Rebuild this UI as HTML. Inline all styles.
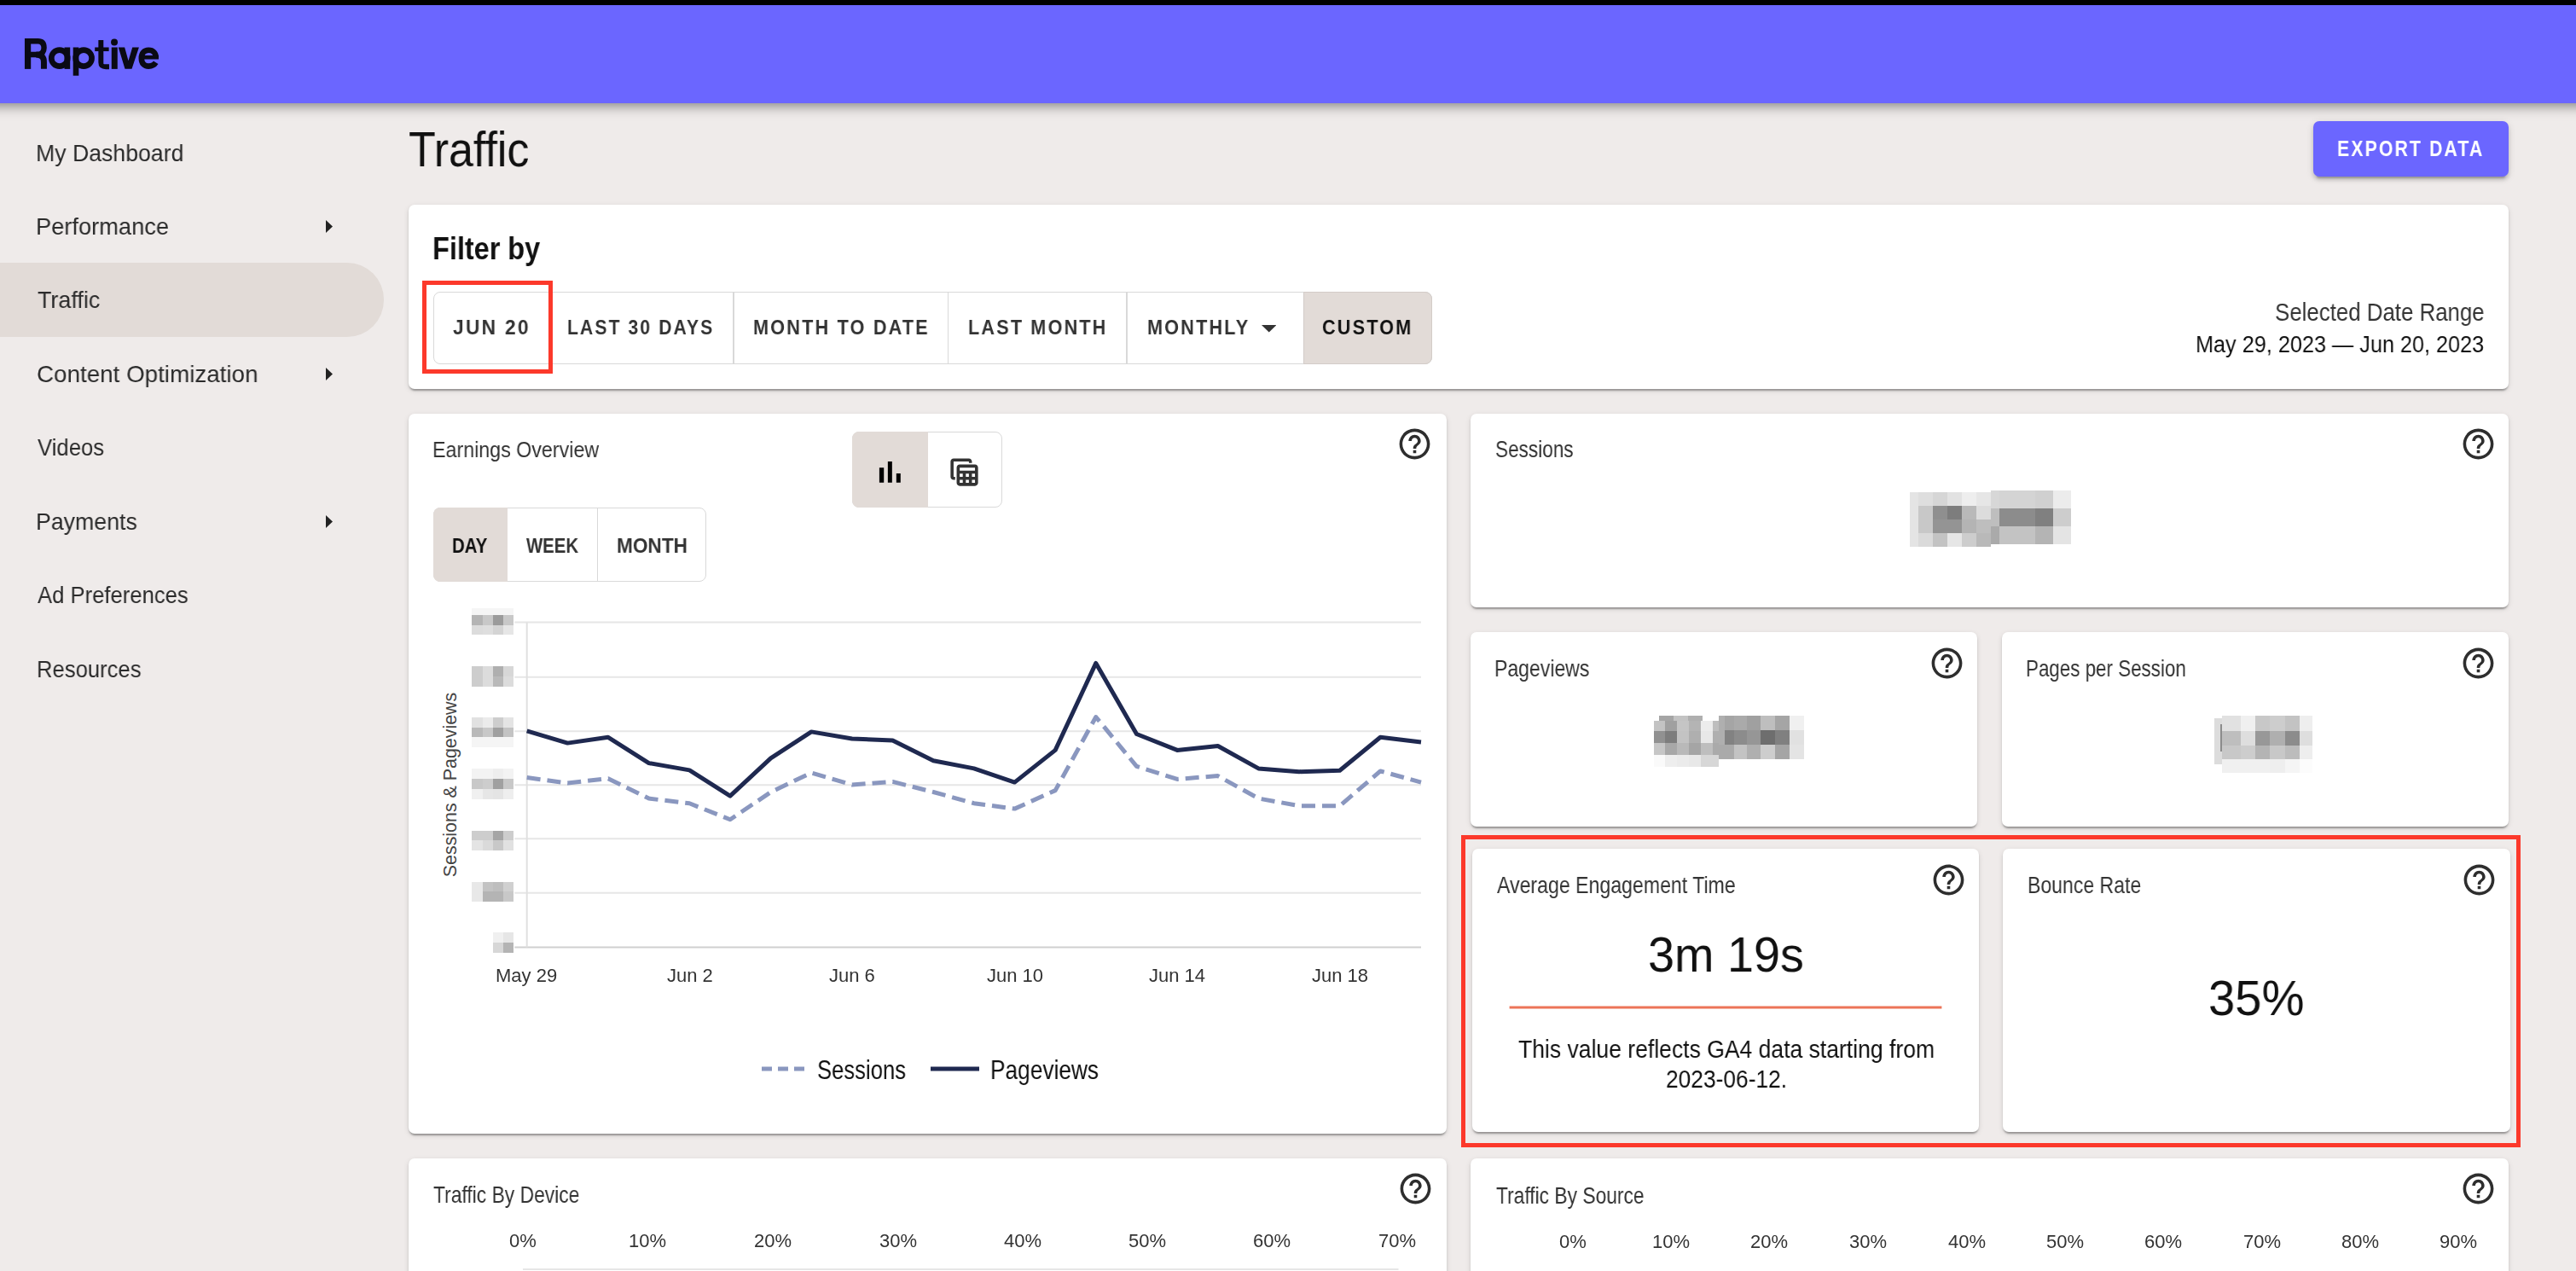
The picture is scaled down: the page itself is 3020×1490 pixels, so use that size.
<!DOCTYPE html>
<html><head><meta charset="utf-8"><style>
html,body{margin:0;padding:0;}
body{width:3020px;height:1490px;overflow:hidden;position:relative;background:#efebea;font-family:"Liberation Sans",sans-serif;}
.a{position:absolute;}
.t{position:absolute;white-space:nowrap;transform-origin:0 0;z-index:3;will-change:transform;}
</style></head><body>
<div class="a" style="left:0.0px;top:0.0px;width:3020.0px;height:6.0px;background:#000;"></div>
<div class="a" style="left:-60.0px;top:6.0px;width:3140.0px;height:115.0px;background:#6b66ff;box-shadow:0 4px 8px -2px rgba(0,0,0,.2),0 8px 10px 0 rgba(0,0,0,.14),0 2px 20px 0 rgba(0,0,0,.12);z-index:2;"></div>
<svg class="a" style="left:0;top:0;z-index:3" width="220" height="110" viewBox="0 0 220 110"><g transform="translate(20,30) scale(0.069881)" fill="#0a0a14" stroke="#0a0a14">
<rect x="128" y="215" width="104" height="513" stroke="none"/>
<path d="M180,260 H350 C430,260 452,310 452,372 C452,440 420,487 340,487 H180" fill="none" stroke-width="92"/>
<path d="M320,487 C420,492 450,540 450,610 V728" fill="none" stroke-width="100"/>
<ellipse cx="712" cy="546" rx="135" ry="136" fill="none" stroke-width="95"/>
<rect x="795" y="365" width="95" height="363" stroke="none"/>
<rect x="940" y="365" width="95" height="475" stroke="none"/>
<ellipse cx="1118" cy="546" rx="135" ry="136" fill="none" stroke-width="95"/>
<path d="M1407,245 V620 C1407,680 1430,690 1490,690 H1545" fill="none" stroke-width="85"/>
<rect x="1305" y="365" width="235" height="65" stroke="none"/>
<circle cx="1632" cy="280" r="57" stroke="none"/>
<rect x="1585" y="365" width="100" height="363" stroke="none"/>
<polygon points="1700,365 1805,365 1868,590 1935,365 2045,365 1925,728 1810,728" stroke="none"/>
<path d="M2328,620 C2300,665 2260,681 2207,681 C2130,681 2087,630 2087,546 C2087,465 2130,412 2207,412 C2285,412 2328,465 2328,532" fill="none" stroke-width="95"/>
<rect x="2087" y="500" width="288" height="65" stroke="none"/>
</g></svg>
<div class="a" style="left:0.0px;top:308.0px;width:450.0px;height:86.6px;background:#e2dbd7;border-radius:0 43px 43px 0;"></div>
<svg class="a" style="left:382px;top:257.5px" width="8" height="15" viewBox="0 0 8 15"><path d="M0 0L8 7.5L0 15Z" fill="#222"/></svg>
<svg class="a" style="left:382px;top:430.9px" width="8" height="15" viewBox="0 0 8 15"><path d="M0 0L8 7.5L0 15Z" fill="#222"/></svg>
<svg class="a" style="left:382px;top:604.0px" width="8" height="15" viewBox="0 0 8 15"><path d="M0 0L8 7.5L0 15Z" fill="#222"/></svg>
<div class="a" style="left:2712.0px;top:142.0px;width:229.0px;height:65.0px;background:#6b66ff;border-radius:7px;box-shadow:0 6px 2px -4px rgba(0,0,0,.2),0 4px 4px 0 rgba(0,0,0,.14),0 2px 10px 0 rgba(0,0,0,.12);"></div>
<div class="a" style="left:479.0px;top:240.0px;width:2462.0px;height:215.8px;background:#fff;border-radius:7px;box-shadow:0 4px 2px -2px rgba(0,0,0,0.2),0 2px 2px 0 rgba(0,0,0,0.14),0 2px 6px 0 rgba(0,0,0,0.12);"></div>
<div class="a" style="left:479.0px;top:484.8px;width:1217.0px;height:844.0px;background:#fff;border-radius:7px;box-shadow:0 4px 2px -2px rgba(0,0,0,0.2),0 2px 2px 0 rgba(0,0,0,0.14),0 2px 6px 0 rgba(0,0,0,0.12);"></div>
<div class="a" style="left:1724.0px;top:484.9px;width:1217.0px;height:227.1px;background:#fff;border-radius:7px;box-shadow:0 4px 2px -2px rgba(0,0,0,0.2),0 2px 2px 0 rgba(0,0,0,0.14),0 2px 6px 0 rgba(0,0,0,0.12);"></div>
<div class="a" style="left:1724.0px;top:740.8px;width:593.6px;height:228.5px;background:#fff;border-radius:7px;box-shadow:0 4px 2px -2px rgba(0,0,0,0.2),0 2px 2px 0 rgba(0,0,0,0.14),0 2px 6px 0 rgba(0,0,0,0.12);"></div>
<div class="a" style="left:2347.0px;top:740.8px;width:594.0px;height:228.5px;background:#fff;border-radius:7px;box-shadow:0 4px 2px -2px rgba(0,0,0,0.2),0 2px 2px 0 rgba(0,0,0,0.14),0 2px 6px 0 rgba(0,0,0,0.12);"></div>
<div class="a" style="left:1725.8px;top:994.8px;width:593.8px;height:331.9px;background:#fff;border-radius:7px;box-shadow:0 4px 2px -2px rgba(0,0,0,0.2),0 2px 2px 0 rgba(0,0,0,0.14),0 2px 6px 0 rgba(0,0,0,0.12);"></div>
<div class="a" style="left:2348.4px;top:994.8px;width:594.8px;height:331.9px;background:#fff;border-radius:7px;box-shadow:0 4px 2px -2px rgba(0,0,0,0.2),0 2px 2px 0 rgba(0,0,0,0.14),0 2px 6px 0 rgba(0,0,0,0.12);"></div>
<div class="a" style="left:479.0px;top:1357.8px;width:1217.0px;height:172.2px;background:#fff;border-radius:7px;box-shadow:0 4px 2px -2px rgba(0,0,0,0.2),0 2px 2px 0 rgba(0,0,0,0.14),0 2px 6px 0 rgba(0,0,0,0.12);"></div>
<div class="a" style="left:1724.0px;top:1357.6px;width:1217.0px;height:172.4px;background:#fff;border-radius:7px;box-shadow:0 4px 2px -2px rgba(0,0,0,0.2),0 2px 2px 0 rgba(0,0,0,0.14),0 2px 6px 0 rgba(0,0,0,0.12);"></div>
<div class="a" style="left:508.3px;top:342.3px;width:1170.7px;height:84.9px;border:1.5px solid #d9d9d9;border-radius:8px;box-sizing:border-box;overflow:hidden;"></div>
<div class="a" style="left:1528.0px;top:342.3px;width:151.0px;height:84.9px;background:#e2dbd7;border-radius:0 8px 8px 0;border:1.5px solid #d3ccc8;box-sizing:border-box;"></div>
<div class="a" style="left:643.2px;top:342.3px;width:1.5px;height:84.9px;background:#d9d9d9;"></div>
<div class="a" style="left:859.2px;top:342.3px;width:1.5px;height:84.9px;background:#d9d9d9;"></div>
<div class="a" style="left:1110.8px;top:342.3px;width:1.5px;height:84.9px;background:#d9d9d9;"></div>
<div class="a" style="left:1320.0px;top:342.3px;width:1.5px;height:84.9px;background:#d9d9d9;"></div>
<svg class="a" style="left:1478.5px;top:381px" width="17.5" height="8.5" viewBox="0 0 17.5 8.5"><path d="M0 0H17.5L8.75 8.5Z" fill="#333"/></svg>
<div class="a" style="left:999.0px;top:506.1px;width:175.5px;height:88.9px;border:1.5px solid #d9d9d9;border-radius:8px;box-sizing:border-box;"></div>
<div class="a" style="left:999.0px;top:506.1px;width:88.8px;height:88.9px;background:#e2dbd7;border-radius:8px 0 0 8px;"></div>
<svg class="a" style="left:1022.1px;top:532.1px" width="42.7" height="42.7" viewBox="0 0 24 24"><path d="M5 9.2h3V19H5zM10.6 5h2.8v14h-2.8zm5.6 8H19v6h-2.8z" fill="#000"/></svg>
<svg class="a" style="left:1109.3px;top:531.5px" width="43" height="43" viewBox="0 0 24 24"><path d="M19 7H9c-1.1 0-2 .9-2 2v10c0 1.1.9 2 2 2h10c1.1 0 2-.9 2-2V9c0-1.1-.9-2-2-2zm0 2v2H9V9h10zm-6 6v-2h2v2h-2zm2 2v2h-2v-2h2zm-4-2H9v-2h2v2zm6-2h2v2h-2v-2zm-8 4h2v2H9v-2zm8 2v-2h2v2h-2zM6 17H5c-1.1 0-2-.9-2-2V5c0-1.1.9-2 2-2h10c1.1 0 2 .9 2 2v1h-2V5H5v10h1v2z" fill="#333"/></svg>
<div class="a" style="left:508.3px;top:595.2px;width:319.3px;height:86.8px;border:1.5px solid #d9d9d9;border-radius:8px;box-sizing:border-box;"></div>
<div class="a" style="left:508.3px;top:595.2px;width:86.4px;height:86.8px;background:#e2dbd7;border-radius:8px 0 0 8px;"></div>
<div class="a" style="left:699.7px;top:595.2px;width:1.4px;height:86.8px;background:#d9d9d9;"></div>
<svg class="a" style="left:1637.0px;top:498.9px" width="43.0" height="43.0" viewBox="0 0 24 24"><path d="M11 18h2v-2h-2v2zm1-16C6.48 2 2 6.48 2 12s4.48 10 10 10 10-4.48 10-10S17.52 2 12 2zm0 18c-4.41 0-8-3.59-8-8s3.59-8 8-8 8 3.59 8 8-3.59 8-8 8zm0-14c-2.21 0-4 1.79-4 4h2c0-1.1.9-2 2-2s2 .9 2 2c0 2-3 1.75-3 5h2c0-2.25 3-2.5 3-5 0-2.21-1.79-4-4-4z" fill="#2e2e2e"/></svg>
<svg class="a" style="left:2884.0px;top:498.7px" width="43.0" height="43.0" viewBox="0 0 24 24"><path d="M11 18h2v-2h-2v2zm1-16C6.48 2 2 6.48 2 12s4.48 10 10 10 10-4.48 10-10S17.52 2 12 2zm0 18c-4.41 0-8-3.59-8-8s3.59-8 8-8 8 3.59 8 8-3.59 8-8 8zm0-14c-2.21 0-4 1.79-4 4h2c0-1.1.9-2 2-2s2 .9 2 2c0 2-3 1.75-3 5h2c0-2.25 3-2.5 3-5 0-2.21-1.79-4-4-4z" fill="#2e2e2e"/></svg>
<svg class="a" style="left:2260.6px;top:756.1px" width="43.0" height="43.0" viewBox="0 0 24 24"><path d="M11 18h2v-2h-2v2zm1-16C6.48 2 2 6.48 2 12s4.48 10 10 10 10-4.48 10-10S17.52 2 12 2zm0 18c-4.41 0-8-3.59-8-8s3.59-8 8-8 8 3.59 8 8-3.59 8-8 8zm0-14c-2.21 0-4 1.79-4 4h2c0-1.1.9-2 2-2s2 .9 2 2c0 2-3 1.75-3 5h2c0-2.25 3-2.5 3-5 0-2.21-1.79-4-4-4z" fill="#2e2e2e"/></svg>
<svg class="a" style="left:2884.0px;top:756.1px" width="43.0" height="43.0" viewBox="0 0 24 24"><path d="M11 18h2v-2h-2v2zm1-16C6.48 2 2 6.48 2 12s4.48 10 10 10 10-4.48 10-10S17.52 2 12 2zm0 18c-4.41 0-8-3.59-8-8s3.59-8 8-8 8 3.59 8 8-3.59 8-8 8zm0-14c-2.21 0-4 1.79-4 4h2c0-1.1.9-2 2-2s2 .9 2 2c0 2-3 1.75-3 5h2c0-2.25 3-2.5 3-5 0-2.21-1.79-4-4-4z" fill="#2e2e2e"/></svg>
<svg class="a" style="left:2262.7px;top:1010.0px" width="43.0" height="43.0" viewBox="0 0 24 24"><path d="M11 18h2v-2h-2v2zm1-16C6.48 2 2 6.48 2 12s4.48 10 10 10 10-4.48 10-10S17.52 2 12 2zm0 18c-4.41 0-8-3.59-8-8s3.59-8 8-8 8 3.59 8 8-3.59 8-8 8zm0-14c-2.21 0-4 1.79-4 4h2c0-1.1.9-2 2-2s2 .9 2 2c0 2-3 1.75-3 5h2c0-2.25 3-2.5 3-5 0-2.21-1.79-4-4-4z" fill="#2e2e2e"/></svg>
<svg class="a" style="left:2885.4px;top:1010.0px" width="43.0" height="43.0" viewBox="0 0 24 24"><path d="M11 18h2v-2h-2v2zm1-16C6.48 2 2 6.48 2 12s4.48 10 10 10 10-4.48 10-10S17.52 2 12 2zm0 18c-4.41 0-8-3.59-8-8s3.59-8 8-8 8 3.59 8 8-3.59 8-8 8zm0-14c-2.21 0-4 1.79-4 4h2c0-1.1.9-2 2-2s2 .9 2 2c0 2-3 1.75-3 5h2c0-2.25 3-2.5 3-5 0-2.21-1.79-4-4-4z" fill="#2e2e2e"/></svg>
<svg class="a" style="left:1638.1px;top:1372.1px" width="43.0" height="43.0" viewBox="0 0 24 24"><path d="M11 18h2v-2h-2v2zm1-16C6.48 2 2 6.48 2 12s4.48 10 10 10 10-4.48 10-10S17.52 2 12 2zm0 18c-4.41 0-8-3.59-8-8s3.59-8 8-8 8 3.59 8 8-3.59 8-8 8zm0-14c-2.21 0-4 1.79-4 4h2c0-1.1.9-2 2-2s2 .9 2 2c0 2-3 1.75-3 5h2c0-2.25 3-2.5 3-5 0-2.21-1.79-4-4-4z" fill="#2e2e2e"/></svg>
<svg class="a" style="left:2884.0px;top:1372.2px" width="43.0" height="43.0" viewBox="0 0 24 24"><path d="M11 18h2v-2h-2v2zm1-16C6.48 2 2 6.48 2 12s4.48 10 10 10 10-4.48 10-10S17.52 2 12 2zm0 18c-4.41 0-8-3.59-8-8s3.59-8 8-8 8 3.59 8 8-3.59 8-8 8zm0-14c-2.21 0-4 1.79-4 4h2c0-1.1.9-2 2-2s2 .9 2 2c0 2-3 1.75-3 5h2c0-2.25 3-2.5 3-5 0-2.21-1.79-4-4-4z" fill="#2e2e2e"/></svg>
<svg class="a" style="left:0;top:0" width="3020" height="1490"><line x1="603.3" y1="729.5" x2="1666" y2="729.5" stroke="#e6e6e6" stroke-width="2"/><line x1="603.3" y1="793.7" x2="1666" y2="793.7" stroke="#e6e6e6" stroke-width="2"/><line x1="603.3" y1="857.2" x2="1666" y2="857.2" stroke="#e6e6e6" stroke-width="2"/><line x1="603.3" y1="920.3" x2="1666" y2="920.3" stroke="#e6e6e6" stroke-width="2"/><line x1="603.3" y1="983.3" x2="1666" y2="983.3" stroke="#e6e6e6" stroke-width="2"/><line x1="603.3" y1="1046.8" x2="1666" y2="1046.8" stroke="#e6e6e6" stroke-width="2"/><line x1="603.3" y1="1110.6" x2="1666" y2="1110.6" stroke="#d0d0d0" stroke-width="2"/><line x1="617.7" y1="729.5" x2="617.7" y2="1110.6" stroke="#e0e0e0" stroke-width="2"/><polyline points="617.7,911.6 665.4,918.0 713.0,912.7 760.7,936.1 808.3,941.8 856.0,960.7 903.6,928.6 951.2,905.9 998.9,920.0 1046.5,916.4 1094.2,928.5 1141.8,941.7 1189.5,948.1 1237.2,926.6 1284.8,840.5 1332.5,898.3 1380.1,913.4 1427.8,909.6 1475.4,936.0 1523.1,944.7 1570.7,944.7 1618.3,903.9 1666.0,917.1" fill="none" stroke="#8a97bf" stroke-width="5" stroke-dasharray="16,8" stroke-linejoin="round"/><polyline points="617.7,856.8 665.4,871.1 713.0,864.3 760.7,894.6 808.3,902.9 856.0,933.1 903.6,888.9 951.2,857.9 998.9,866.0 1046.5,868.0 1094.2,891.8 1141.8,900.9 1189.5,917.1 1237.2,879.4 1284.8,777.4 1332.5,860.5 1380.1,879.4 1427.8,874.5 1475.4,900.9 1523.1,904.7 1570.7,903.2 1618.3,864.3 1666.0,869.9" fill="none" stroke="#1f2950" stroke-width="5" stroke-linejoin="round"/><line x1="893" y1="1253" x2="943" y2="1253" stroke="#8a97bf" stroke-width="5" stroke-dasharray="12,7"/><line x1="1091" y1="1253" x2="1148" y2="1253" stroke="#1f2950" stroke-width="5"/><line x1="613" y1="1488" x2="1639.5" y2="1488" stroke="#e6e6e6" stroke-width="2"/><line x1="1769.6" y1="1181" x2="2276.4" y2="1181" stroke="#ec7459" stroke-width="3"/></svg>
<div style="position:absolute;left:528.8px;top:919.9px;width:0;height:0;z-index:3"><div style="position:absolute;left:0;top:0;font-size:21.4px;line-height:21.4px;color:#444;transform:translate(-50%,-50%) rotate(-90deg);white-space:nowrap;">Sessions &amp; Pageviews</div></div>
<div class="a" style="left:553.0px;top:713.0px;width:13.0px;height:8.0px;background:rgb(245,245,245);"></div>
<div class="a" style="left:566.0px;top:713.0px;width:12.0px;height:8.0px;background:rgb(245,245,245);"></div>
<div class="a" style="left:578.0px;top:713.0px;width:12.0px;height:8.0px;background:rgb(245,245,245);"></div>
<div class="a" style="left:590.0px;top:713.0px;width:12.0px;height:8.0px;background:rgb(245,245,245);"></div>
<div class="a" style="left:553.0px;top:721.0px;width:13.0px;height:12.0px;background:rgb(180,180,180);"></div>
<div class="a" style="left:566.0px;top:721.0px;width:12.0px;height:12.0px;background:rgb(200,200,200);"></div>
<div class="a" style="left:578.0px;top:721.0px;width:12.0px;height:12.0px;background:rgb(155,155,155);"></div>
<div class="a" style="left:590.0px;top:721.0px;width:12.0px;height:12.0px;background:rgb(200,200,200);"></div>
<div class="a" style="left:553.0px;top:733.0px;width:13.0px;height:11.0px;background:rgb(220,220,220);"></div>
<div class="a" style="left:566.0px;top:733.0px;width:12.0px;height:11.0px;background:rgb(222,222,222);"></div>
<div class="a" style="left:578.0px;top:733.0px;width:12.0px;height:11.0px;background:rgb(212,212,212);"></div>
<div class="a" style="left:590.0px;top:733.0px;width:12.0px;height:11.0px;background:rgb(230,230,230);"></div>
<div class="a" style="left:553.0px;top:781.0px;width:13.0px;height:12.0px;background:rgb(205,205,205);"></div>
<div class="a" style="left:566.0px;top:781.0px;width:12.0px;height:12.0px;background:rgb(220,220,220);"></div>
<div class="a" style="left:578.0px;top:781.0px;width:12.0px;height:12.0px;background:rgb(175,175,175);"></div>
<div class="a" style="left:590.0px;top:781.0px;width:12.0px;height:12.0px;background:rgb(215,215,215);"></div>
<div class="a" style="left:553.0px;top:793.0px;width:13.0px;height:12.0px;background:rgb(205,205,205);"></div>
<div class="a" style="left:566.0px;top:793.0px;width:12.0px;height:12.0px;background:rgb(220,220,220);"></div>
<div class="a" style="left:578.0px;top:793.0px;width:12.0px;height:12.0px;background:rgb(185,185,185);"></div>
<div class="a" style="left:590.0px;top:793.0px;width:12.0px;height:12.0px;background:rgb(220,220,220);"></div>
<div class="a" style="left:553.0px;top:841.0px;width:13.0px;height:12.0px;background:rgb(225,225,225);"></div>
<div class="a" style="left:566.0px;top:841.0px;width:12.0px;height:12.0px;background:rgb(235,235,235);"></div>
<div class="a" style="left:578.0px;top:841.0px;width:12.0px;height:12.0px;background:rgb(205,205,205);"></div>
<div class="a" style="left:590.0px;top:841.0px;width:12.0px;height:12.0px;background:rgb(228,228,228);"></div>
<div class="a" style="left:553.0px;top:853.0px;width:13.0px;height:11.0px;background:rgb(185,185,185);"></div>
<div class="a" style="left:566.0px;top:853.0px;width:12.0px;height:11.0px;background:rgb(200,200,200);"></div>
<div class="a" style="left:578.0px;top:853.0px;width:12.0px;height:11.0px;background:rgb(160,160,160);"></div>
<div class="a" style="left:590.0px;top:853.0px;width:12.0px;height:11.0px;background:rgb(195,195,195);"></div>
<div class="a" style="left:553.0px;top:864.0px;width:13.0px;height:12.0px;background:rgb(245,245,245);"></div>
<div class="a" style="left:566.0px;top:864.0px;width:12.0px;height:12.0px;background:rgb(245,245,245);"></div>
<div class="a" style="left:578.0px;top:864.0px;width:12.0px;height:12.0px;background:rgb(245,245,245);"></div>
<div class="a" style="left:590.0px;top:864.0px;width:12.0px;height:12.0px;background:rgb(245,245,245);"></div>
<div class="a" style="left:553.0px;top:901.0px;width:13.0px;height:12.0px;background:rgb(243,243,243);"></div>
<div class="a" style="left:566.0px;top:901.0px;width:12.0px;height:12.0px;background:rgb(243,243,243);"></div>
<div class="a" style="left:578.0px;top:901.0px;width:12.0px;height:12.0px;background:rgb(238,238,238);"></div>
<div class="a" style="left:590.0px;top:901.0px;width:12.0px;height:12.0px;background:rgb(243,243,243);"></div>
<div class="a" style="left:553.0px;top:913.0px;width:13.0px;height:12.0px;background:rgb(200,200,200);"></div>
<div class="a" style="left:566.0px;top:913.0px;width:12.0px;height:12.0px;background:rgb(205,205,205);"></div>
<div class="a" style="left:578.0px;top:913.0px;width:12.0px;height:12.0px;background:rgb(160,160,160);"></div>
<div class="a" style="left:590.0px;top:913.0px;width:12.0px;height:12.0px;background:rgb(200,200,200);"></div>
<div class="a" style="left:553.0px;top:925.0px;width:13.0px;height:12.0px;background:rgb(240,240,240);"></div>
<div class="a" style="left:566.0px;top:925.0px;width:12.0px;height:12.0px;background:rgb(230,230,230);"></div>
<div class="a" style="left:578.0px;top:925.0px;width:12.0px;height:12.0px;background:rgb(228,228,228);"></div>
<div class="a" style="left:590.0px;top:925.0px;width:12.0px;height:12.0px;background:rgb(238,238,238);"></div>
<div class="a" style="left:553.0px;top:974.0px;width:13.0px;height:11.0px;background:rgb(205,205,205);"></div>
<div class="a" style="left:566.0px;top:974.0px;width:12.0px;height:11.0px;background:rgb(205,205,205);"></div>
<div class="a" style="left:578.0px;top:974.0px;width:12.0px;height:11.0px;background:rgb(165,165,165);"></div>
<div class="a" style="left:590.0px;top:974.0px;width:12.0px;height:11.0px;background:rgb(205,205,205);"></div>
<div class="a" style="left:553.0px;top:985.0px;width:13.0px;height:12.0px;background:rgb(228,228,228);"></div>
<div class="a" style="left:566.0px;top:985.0px;width:12.0px;height:12.0px;background:rgb(218,218,218);"></div>
<div class="a" style="left:578.0px;top:985.0px;width:12.0px;height:12.0px;background:rgb(200,200,200);"></div>
<div class="a" style="left:590.0px;top:985.0px;width:12.0px;height:12.0px;background:rgb(225,225,225);"></div>
<div class="a" style="left:553.0px;top:1034.0px;width:13.0px;height:11.0px;background:rgb(232,232,232);"></div>
<div class="a" style="left:566.0px;top:1034.0px;width:12.0px;height:11.0px;background:rgb(195,195,195);"></div>
<div class="a" style="left:578.0px;top:1034.0px;width:12.0px;height:11.0px;background:rgb(190,190,190);"></div>
<div class="a" style="left:590.0px;top:1034.0px;width:12.0px;height:11.0px;background:rgb(208,208,208);"></div>
<div class="a" style="left:553.0px;top:1045.0px;width:13.0px;height:12.0px;background:rgb(232,232,232);"></div>
<div class="a" style="left:566.0px;top:1045.0px;width:12.0px;height:12.0px;background:rgb(180,180,180);"></div>
<div class="a" style="left:578.0px;top:1045.0px;width:12.0px;height:12.0px;background:rgb(180,180,180);"></div>
<div class="a" style="left:590.0px;top:1045.0px;width:12.0px;height:12.0px;background:rgb(200,200,200);"></div>
<div class="a" style="left:578.0px;top:1093.0px;width:12.0px;height:12.0px;background:rgb(240,240,240);"></div>
<div class="a" style="left:590.0px;top:1093.0px;width:12.0px;height:12.0px;background:rgb(230,230,230);"></div>
<div class="a" style="left:578.0px;top:1105.0px;width:12.0px;height:12.0px;background:rgb(215,215,215);"></div>
<div class="a" style="left:590.0px;top:1105.0px;width:12.0px;height:12.0px;background:rgb(180,180,180);"></div>
<div class="a" style="left:2239.0px;top:577.0px;width:10.0px;height:64.0px;background:rgb(228,228,228);"></div>
<div class="a" style="left:2249.0px;top:577.0px;width:17.0px;height:16.0px;background:rgb(222,222,222);"></div>
<div class="a" style="left:2266.0px;top:577.0px;width:17.0px;height:16.0px;background:rgb(214,214,214);"></div>
<div class="a" style="left:2283.0px;top:577.0px;width:17.0px;height:16.0px;background:rgb(226,226,226);"></div>
<div class="a" style="left:2300.0px;top:577.0px;width:17.0px;height:16.0px;background:rgb(238,238,238);"></div>
<div class="a" style="left:2317.0px;top:577.0px;width:17.0px;height:16.0px;background:rgb(230,230,230);"></div>
<div class="a" style="left:2249.0px;top:593.0px;width:17.0px;height:16.0px;background:rgb(200,200,200);"></div>
<div class="a" style="left:2266.0px;top:593.0px;width:17.0px;height:16.0px;background:rgb(143,143,143);"></div>
<div class="a" style="left:2283.0px;top:593.0px;width:17.0px;height:16.0px;background:rgb(125,125,125);"></div>
<div class="a" style="left:2300.0px;top:593.0px;width:17.0px;height:16.0px;background:rgb(185,185,185);"></div>
<div class="a" style="left:2317.0px;top:593.0px;width:17.0px;height:16.0px;background:rgb(220,220,220);"></div>
<div class="a" style="left:2249.0px;top:609.0px;width:17.0px;height:16.0px;background:rgb(200,200,200);"></div>
<div class="a" style="left:2266.0px;top:609.0px;width:17.0px;height:16.0px;background:rgb(148,148,148);"></div>
<div class="a" style="left:2283.0px;top:609.0px;width:17.0px;height:16.0px;background:rgb(148,148,148);"></div>
<div class="a" style="left:2300.0px;top:609.0px;width:17.0px;height:16.0px;background:rgb(180,180,180);"></div>
<div class="a" style="left:2317.0px;top:609.0px;width:17.0px;height:16.0px;background:rgb(190,190,190);"></div>
<div class="a" style="left:2249.0px;top:625.0px;width:17.0px;height:16.0px;background:rgb(218,218,218);"></div>
<div class="a" style="left:2266.0px;top:625.0px;width:17.0px;height:16.0px;background:rgb(195,195,195);"></div>
<div class="a" style="left:2283.0px;top:625.0px;width:17.0px;height:16.0px;background:rgb(230,230,230);"></div>
<div class="a" style="left:2300.0px;top:625.0px;width:17.0px;height:16.0px;background:rgb(205,205,205);"></div>
<div class="a" style="left:2317.0px;top:625.0px;width:17.0px;height:16.0px;background:rgb(185,185,185);"></div>
<div class="a" style="left:2334.0px;top:575.0px;width:10.0px;height:21.0px;background:rgb(215,215,215);"></div>
<div class="a" style="left:2344.0px;top:575.0px;width:21.0px;height:21.0px;background:rgb(212,212,212);"></div>
<div class="a" style="left:2365.0px;top:575.0px;width:21.0px;height:21.0px;background:rgb(212,212,212);"></div>
<div class="a" style="left:2386.0px;top:575.0px;width:21.0px;height:21.0px;background:rgb(208,208,208);"></div>
<div class="a" style="left:2407.0px;top:575.0px;width:21.0px;height:21.0px;background:rgb(236,236,236);"></div>
<div class="a" style="left:2334.0px;top:596.0px;width:10.0px;height:21.0px;background:rgb(190,190,190);"></div>
<div class="a" style="left:2344.0px;top:596.0px;width:21.0px;height:21.0px;background:rgb(140,140,140);"></div>
<div class="a" style="left:2365.0px;top:596.0px;width:21.0px;height:21.0px;background:rgb(140,140,140);"></div>
<div class="a" style="left:2386.0px;top:596.0px;width:21.0px;height:21.0px;background:rgb(128,128,128);"></div>
<div class="a" style="left:2407.0px;top:596.0px;width:21.0px;height:21.0px;background:rgb(205,205,205);"></div>
<div class="a" style="left:2334.0px;top:617.0px;width:10.0px;height:21.0px;background:rgb(170,170,170);"></div>
<div class="a" style="left:2344.0px;top:617.0px;width:21.0px;height:21.0px;background:rgb(195,195,195);"></div>
<div class="a" style="left:2365.0px;top:617.0px;width:21.0px;height:21.0px;background:rgb(195,195,195);"></div>
<div class="a" style="left:2386.0px;top:617.0px;width:21.0px;height:21.0px;background:rgb(180,180,180);"></div>
<div class="a" style="left:2407.0px;top:617.0px;width:21.0px;height:21.0px;background:rgb(228,228,228);"></div>
<div class="a" style="left:1945.0px;top:839.0px;width:17.0px;height:6.0px;background:rgb(165,165,165);"></div>
<div class="a" style="left:1962.0px;top:839.0px;width:17.0px;height:6.0px;background:rgb(195,195,195);"></div>
<div class="a" style="left:1979.0px;top:839.0px;width:17.0px;height:6.0px;background:rgb(175,175,175);"></div>
<div class="a" style="left:1939.0px;top:845.0px;width:13.0px;height:12.0px;background:rgb(195,195,195);"></div>
<div class="a" style="left:1952.0px;top:845.0px;width:14.0px;height:12.0px;background:rgb(160,160,160);"></div>
<div class="a" style="left:1966.0px;top:845.0px;width:14.0px;height:12.0px;background:rgb(197,197,197);"></div>
<div class="a" style="left:1980.0px;top:845.0px;width:14.0px;height:12.0px;background:rgb(180,180,180);"></div>
<div class="a" style="left:1994.0px;top:845.0px;width:14.0px;height:12.0px;background:rgb(236,236,236);"></div>
<div class="a" style="left:2008.0px;top:845.0px;width:7.0px;height:12.0px;background:rgb(190,190,190);"></div>
<div class="a" style="left:1939.0px;top:857.0px;width:13.0px;height:14.0px;background:rgb(145,145,145);"></div>
<div class="a" style="left:1952.0px;top:857.0px;width:14.0px;height:14.0px;background:rgb(125,125,125);"></div>
<div class="a" style="left:1966.0px;top:857.0px;width:14.0px;height:14.0px;background:rgb(195,195,195);"></div>
<div class="a" style="left:1980.0px;top:857.0px;width:14.0px;height:14.0px;background:rgb(175,175,175);"></div>
<div class="a" style="left:1994.0px;top:857.0px;width:14.0px;height:14.0px;background:rgb(232,232,232);"></div>
<div class="a" style="left:2008.0px;top:857.0px;width:7.0px;height:14.0px;background:rgb(175,175,175);"></div>
<div class="a" style="left:1939.0px;top:871.0px;width:13.0px;height:14.0px;background:rgb(198,198,198);"></div>
<div class="a" style="left:1952.0px;top:871.0px;width:14.0px;height:14.0px;background:rgb(168,168,168);"></div>
<div class="a" style="left:1966.0px;top:871.0px;width:14.0px;height:14.0px;background:rgb(185,185,185);"></div>
<div class="a" style="left:1980.0px;top:871.0px;width:14.0px;height:14.0px;background:rgb(165,165,165);"></div>
<div class="a" style="left:1994.0px;top:871.0px;width:14.0px;height:14.0px;background:rgb(190,190,190);"></div>
<div class="a" style="left:2008.0px;top:871.0px;width:7.0px;height:14.0px;background:rgb(170,170,170);"></div>
<div class="a" style="left:1939.0px;top:885.0px;width:13.0px;height:14.0px;background:rgb(250,250,250);"></div>
<div class="a" style="left:1952.0px;top:885.0px;width:14.0px;height:14.0px;background:rgb(238,238,238);"></div>
<div class="a" style="left:1966.0px;top:885.0px;width:14.0px;height:14.0px;background:rgb(235,235,235);"></div>
<div class="a" style="left:1980.0px;top:885.0px;width:14.0px;height:14.0px;background:rgb(232,232,232);"></div>
<div class="a" style="left:1994.0px;top:885.0px;width:14.0px;height:14.0px;background:rgb(215,215,215);"></div>
<div class="a" style="left:2008.0px;top:885.0px;width:7.0px;height:14.0px;background:rgb(215,215,215);"></div>
<div class="a" style="left:2015.0px;top:839.0px;width:7.0px;height:17.0px;background:rgb(175,175,175);"></div>
<div class="a" style="left:2022.0px;top:839.0px;width:11.0px;height:17.0px;background:rgb(165,165,165);"></div>
<div class="a" style="left:2033.0px;top:839.0px;width:15.0px;height:17.0px;background:rgb(170,170,170);"></div>
<div class="a" style="left:2048.0px;top:839.0px;width:16.0px;height:17.0px;background:rgb(160,160,160);"></div>
<div class="a" style="left:2064.0px;top:839.0px;width:17.0px;height:17.0px;background:rgb(190,190,190);"></div>
<div class="a" style="left:2081.0px;top:839.0px;width:17.0px;height:17.0px;background:rgb(165,165,165);"></div>
<div class="a" style="left:2098.0px;top:839.0px;width:17.0px;height:17.0px;background:rgb(240,240,240);"></div>
<div class="a" style="left:2015.0px;top:856.0px;width:7.0px;height:17.0px;background:rgb(175,175,175);"></div>
<div class="a" style="left:2022.0px;top:856.0px;width:11.0px;height:17.0px;background:rgb(130,130,130);"></div>
<div class="a" style="left:2033.0px;top:856.0px;width:15.0px;height:17.0px;background:rgb(140,140,140);"></div>
<div class="a" style="left:2048.0px;top:856.0px;width:16.0px;height:17.0px;background:rgb(150,150,150);"></div>
<div class="a" style="left:2064.0px;top:856.0px;width:17.0px;height:17.0px;background:rgb(110,110,110);"></div>
<div class="a" style="left:2081.0px;top:856.0px;width:17.0px;height:17.0px;background:rgb(128,128,128);"></div>
<div class="a" style="left:2098.0px;top:856.0px;width:17.0px;height:17.0px;background:rgb(225,225,225);"></div>
<div class="a" style="left:2015.0px;top:873.0px;width:7.0px;height:17.0px;background:rgb(170,170,170);"></div>
<div class="a" style="left:2022.0px;top:873.0px;width:11.0px;height:17.0px;background:rgb(170,170,170);"></div>
<div class="a" style="left:2033.0px;top:873.0px;width:15.0px;height:17.0px;background:rgb(195,195,195);"></div>
<div class="a" style="left:2048.0px;top:873.0px;width:16.0px;height:17.0px;background:rgb(175,175,175);"></div>
<div class="a" style="left:2064.0px;top:873.0px;width:17.0px;height:17.0px;background:rgb(205,205,205);"></div>
<div class="a" style="left:2081.0px;top:873.0px;width:17.0px;height:17.0px;background:rgb(165,165,165);"></div>
<div class="a" style="left:2098.0px;top:873.0px;width:17.0px;height:17.0px;background:rgb(228,228,228);"></div>
<div class="a" style="left:2596.0px;top:842.0px;width:9.0px;height:54.0px;background:rgb(220,220,220);"></div>
<div class="a" style="left:2605.0px;top:839.0px;width:22.0px;height:18.0px;background:rgb(225,225,225);"></div>
<div class="a" style="left:2627.0px;top:839.0px;width:17.0px;height:18.0px;background:rgb(240,240,240);"></div>
<div class="a" style="left:2644.0px;top:839.0px;width:17.0px;height:18.0px;background:rgb(200,200,200);"></div>
<div class="a" style="left:2661.0px;top:839.0px;width:18.0px;height:18.0px;background:rgb(205,205,205);"></div>
<div class="a" style="left:2679.0px;top:839.0px;width:17.0px;height:18.0px;background:rgb(195,195,195);"></div>
<div class="a" style="left:2696.0px;top:839.0px;width:15.0px;height:18.0px;background:rgb(238,238,238);"></div>
<div class="a" style="left:2605.0px;top:857.0px;width:22.0px;height:17.0px;background:rgb(190,190,190);"></div>
<div class="a" style="left:2627.0px;top:857.0px;width:17.0px;height:17.0px;background:rgb(222,222,222);"></div>
<div class="a" style="left:2644.0px;top:857.0px;width:17.0px;height:17.0px;background:rgb(152,152,152);"></div>
<div class="a" style="left:2661.0px;top:857.0px;width:18.0px;height:17.0px;background:rgb(175,175,175);"></div>
<div class="a" style="left:2679.0px;top:857.0px;width:17.0px;height:17.0px;background:rgb(140,140,140);"></div>
<div class="a" style="left:2696.0px;top:857.0px;width:15.0px;height:17.0px;background:rgb(222,222,222);"></div>
<div class="a" style="left:2605.0px;top:874.0px;width:22.0px;height:16.0px;background:rgb(200,200,200);"></div>
<div class="a" style="left:2627.0px;top:874.0px;width:17.0px;height:16.0px;background:rgb(205,205,205);"></div>
<div class="a" style="left:2644.0px;top:874.0px;width:17.0px;height:16.0px;background:rgb(180,180,180);"></div>
<div class="a" style="left:2661.0px;top:874.0px;width:18.0px;height:16.0px;background:rgb(200,200,200);"></div>
<div class="a" style="left:2679.0px;top:874.0px;width:17.0px;height:16.0px;background:rgb(188,188,188);"></div>
<div class="a" style="left:2696.0px;top:874.0px;width:15.0px;height:16.0px;background:rgb(238,238,238);"></div>
<div class="a" style="left:2605.0px;top:890.0px;width:22.0px;height:16.0px;background:rgb(240,240,240);"></div>
<div class="a" style="left:2627.0px;top:890.0px;width:17.0px;height:16.0px;background:rgb(240,240,240);"></div>
<div class="a" style="left:2644.0px;top:890.0px;width:17.0px;height:16.0px;background:rgb(240,240,240);"></div>
<div class="a" style="left:2661.0px;top:890.0px;width:18.0px;height:16.0px;background:rgb(238,238,238);"></div>
<div class="a" style="left:2679.0px;top:890.0px;width:17.0px;height:16.0px;background:rgb(245,245,245);"></div>
<div class="a" style="left:2696.0px;top:890.0px;width:15.0px;height:16.0px;background:rgb(252,252,252);"></div>
<div class="a" style="left:2602.5px;top:849.0px;width:2.5px;height:32.0px;background:rgb(140,140,140);"></div>
<div class="a" style="left:495.1px;top:329.4px;width:152.9px;height:108.2px;border:5.2px solid #fc392b;box-sizing:border-box;z-index:5;"></div>
<div class="a" style="left:1713.4px;top:979.4px;width:1241.6px;height:366.0px;border:5px solid #fc392b;box-sizing:border-box;z-index:5;"></div>
<div class="t" style="left:42.4px;top:165.3px;font-size:28.49px;line-height:28.49px;color:#2b2b2b;transform:scaleX(0.9356);">My Dashboard</div>
<div class="t" style="left:42.4px;top:251.2px;font-size:28.49px;line-height:28.49px;color:#2b2b2b;transform:scaleX(0.9568);">Performance</div>
<div class="t" style="left:44.3px;top:336.9px;font-size:28.49px;line-height:28.49px;color:#2b2b2b;transform:scaleX(0.9455);">Traffic</div>
<div class="t" style="left:43.3px;top:424.4px;font-size:28.49px;line-height:28.49px;color:#2b2b2b;transform:scaleX(0.9755);">Content Optimization</div>
<div class="t" style="left:44.3px;top:509.9px;font-size:28.49px;line-height:28.49px;color:#2b2b2b;transform:scaleX(0.9023);">Videos</div>
<div class="t" style="left:42.4px;top:596.9px;font-size:28.49px;line-height:28.49px;color:#2b2b2b;transform:scaleX(0.9380);">Payments</div>
<div class="t" style="left:44.3px;top:682.9px;font-size:28.49px;line-height:28.49px;color:#2b2b2b;transform:scaleX(0.9001);">Ad Preferences</div>
<div class="t" style="left:42.5px;top:769.5px;font-size:28.49px;line-height:28.49px;color:#2b2b2b;transform:scaleX(0.8999);">Resources</div>
<div class="t" style="left:479.2px;top:146.6px;font-size:57.12px;line-height:57.12px;color:#111;transform:scaleX(0.9088);">Traffic</div>
<div class="t" style="left:2740.2px;top:162.0px;font-size:25.44px;line-height:25.44px;color:#fff;font-weight:bold;letter-spacing:2.50px;transform:scaleX(0.8360);">EXPORT DATA</div>
<div class="t" style="left:507.0px;top:272.6px;font-size:37.06px;line-height:37.06px;color:#111;font-weight:bold;transform:scaleX(0.8758);">Filter by</div>
<div class="t" style="left:530.6px;top:372.4px;font-size:24.71px;line-height:24.71px;color:#333;font-weight:bold;letter-spacing:2.50px;transform:scaleX(0.9202);">JUN 20</div>
<div class="t" style="left:665.1px;top:372.4px;font-size:24.71px;line-height:24.71px;color:#333;font-weight:bold;letter-spacing:2.50px;transform:scaleX(0.8532);">LAST 30 DAYS</div>
<div class="t" style="left:882.7px;top:372.4px;font-size:24.71px;line-height:24.71px;color:#333;font-weight:bold;letter-spacing:2.50px;transform:scaleX(0.8764);">MONTH TO DATE</div>
<div class="t" style="left:1135.1px;top:372.4px;font-size:24.71px;line-height:24.71px;color:#333;font-weight:bold;letter-spacing:2.50px;transform:scaleX(0.8747);">LAST MONTH</div>
<div class="t" style="left:1344.8px;top:372.4px;font-size:24.71px;line-height:24.71px;color:#333;font-weight:bold;letter-spacing:2.50px;transform:scaleX(0.8759);">MONTHLY</div>
<div class="t" style="left:1550.1px;top:372.4px;font-size:24.71px;line-height:24.71px;color:#111;font-weight:bold;letter-spacing:2.50px;transform:scaleX(0.8754);">CUSTOM</div>
<div class="t" style="left:2667.0px;top:352.2px;font-size:29.07px;line-height:29.07px;color:#333;transform:scaleX(0.8890);">Selected Date Range</div>
<div class="t" style="left:2574.1px;top:389.0px;font-size:28.34px;line-height:28.34px;color:#111;transform:scaleX(0.8910);">May 29, 2023 — Jun 20, 2023</div>
<div class="t" style="left:506.6px;top:514.1px;font-size:26.60px;line-height:26.60px;color:#333;transform:scaleX(0.8744);">Earnings Overview</div>
<div class="t" style="left:530.1px;top:627.7px;font-size:23.98px;line-height:23.98px;color:#111;font-weight:bold;transform:scaleX(0.8520);">DAY</div>
<div class="t" style="left:616.5px;top:627.7px;font-size:23.98px;line-height:23.98px;color:#333;font-weight:bold;transform:scaleX(0.8513);">WEEK</div>
<div class="t" style="left:722.7px;top:627.7px;font-size:23.98px;line-height:23.98px;color:#333;font-weight:bold;transform:scaleX(0.9444);">MONTH</div>
<div class="t" style="left:581.2px;top:1132.8px;font-size:22.00px;line-height:22.00px;color:#333;">May 29</div>
<div class="t" style="left:781.5px;top:1132.8px;font-size:22.00px;line-height:22.00px;color:#333;">Jun 2</div>
<div class="t" style="left:972.1px;top:1132.8px;font-size:22.00px;line-height:22.00px;color:#333;">Jun 6</div>
<div class="t" style="left:1156.6px;top:1132.8px;font-size:22.00px;line-height:22.00px;color:#333;">Jun 10</div>
<div class="t" style="left:1347.2px;top:1132.8px;font-size:22.00px;line-height:22.00px;color:#333;">Jun 14</div>
<div class="t" style="left:1537.8px;top:1132.8px;font-size:22.00px;line-height:22.00px;color:#333;">Jun 18</div>
<div class="t" style="left:957.8px;top:1237.9px;font-size:31.98px;line-height:31.98px;color:#111;transform:scaleX(0.8017);">Sessions</div>
<div class="t" style="left:1161.4px;top:1237.9px;font-size:31.98px;line-height:31.98px;color:#111;transform:scaleX(0.8218);">Pageviews</div>
<div class="t" style="left:1752.9px;top:514.2px;font-size:26.89px;line-height:26.89px;color:#333;transform:scaleX(0.8401);">Sessions</div>
<div class="t" style="left:1752.0px;top:771.2px;font-size:26.89px;line-height:26.89px;color:#333;transform:scaleX(0.8571);">Pageviews</div>
<div class="t" style="left:2375.1px;top:771.2px;font-size:26.89px;line-height:26.89px;color:#333;transform:scaleX(0.8323);">Pages per Session</div>
<div class="t" style="left:1754.7px;top:1025.2px;font-size:26.89px;line-height:26.89px;color:#333;transform:scaleX(0.8601);">Average Engagement Time</div>
<div class="t" style="left:2376.6px;top:1025.2px;font-size:26.89px;line-height:26.89px;color:#333;transform:scaleX(0.8574);">Bounce Rate</div>
<div class="t" style="left:1931.6px;top:1089.8px;font-size:57.99px;line-height:57.99px;color:#111;transform:scaleX(0.9610);">3m 19s</div>
<div class="t" style="left:1779.5px;top:1215.1px;font-size:30.23px;line-height:30.23px;color:#111;transform:scaleX(0.8779);">This value reflects GA4 data starting from</div>
<div class="t" style="left:1952.5px;top:1249.9px;font-size:30.23px;line-height:30.23px;color:#111;transform:scaleX(0.8717);">2023-06-12.</div>
<div class="t" style="left:2589.1px;top:1142.2px;font-size:57.70px;line-height:57.70px;color:#111;transform:scaleX(0.9736);">35%</div>
<div class="t" style="left:507.8px;top:1387.3px;font-size:28.05px;line-height:28.05px;color:#333;transform:scaleX(0.8146);">Traffic By Device</div>
<div class="t" style="left:1753.7px;top:1387.8px;font-size:27.62px;line-height:27.62px;color:#333;transform:scaleX(0.8258);">Traffic By Source</div>
<div class="t" style="left:597.4px;top:1443.5px;font-size:22.00px;line-height:22.00px;color:#333;">0%</div>
<div class="t" style="left:737.2px;top:1443.5px;font-size:22.00px;line-height:22.00px;color:#333;">10%</div>
<div class="t" style="left:883.6px;top:1443.5px;font-size:22.00px;line-height:22.00px;color:#333;">20%</div>
<div class="t" style="left:1030.6px;top:1443.5px;font-size:22.00px;line-height:22.00px;color:#333;">30%</div>
<div class="t" style="left:1177.0px;top:1443.5px;font-size:22.00px;line-height:22.00px;color:#333;">40%</div>
<div class="t" style="left:1323.4px;top:1443.5px;font-size:22.00px;line-height:22.00px;color:#333;">50%</div>
<div class="t" style="left:1469.3px;top:1443.5px;font-size:22.00px;line-height:22.00px;color:#333;">60%</div>
<div class="t" style="left:1615.8px;top:1443.5px;font-size:22.00px;line-height:22.00px;color:#333;">70%</div>
<div class="t" style="left:1827.8px;top:1445.2px;font-size:22.00px;line-height:22.00px;color:#333;">0%</div>
<div class="t" style="left:1936.6px;top:1445.2px;font-size:22.00px;line-height:22.00px;color:#333;">10%</div>
<div class="t" style="left:2052.1px;top:1445.2px;font-size:22.00px;line-height:22.00px;color:#333;">20%</div>
<div class="t" style="left:2168.1px;top:1445.2px;font-size:22.00px;line-height:22.00px;color:#333;">30%</div>
<div class="t" style="left:2283.5px;top:1445.2px;font-size:22.00px;line-height:22.00px;color:#333;">40%</div>
<div class="t" style="left:2399.0px;top:1445.2px;font-size:22.00px;line-height:22.00px;color:#333;">50%</div>
<div class="t" style="left:2514.0px;top:1445.2px;font-size:22.00px;line-height:22.00px;color:#333;">60%</div>
<div class="t" style="left:2629.5px;top:1445.2px;font-size:22.00px;line-height:22.00px;color:#333;">70%</div>
<div class="t" style="left:2745.4px;top:1445.2px;font-size:22.00px;line-height:22.00px;color:#333;">80%</div>
<div class="t" style="left:2860.4px;top:1445.2px;font-size:22.00px;line-height:22.00px;color:#333;">90%</div>
</body></html>
